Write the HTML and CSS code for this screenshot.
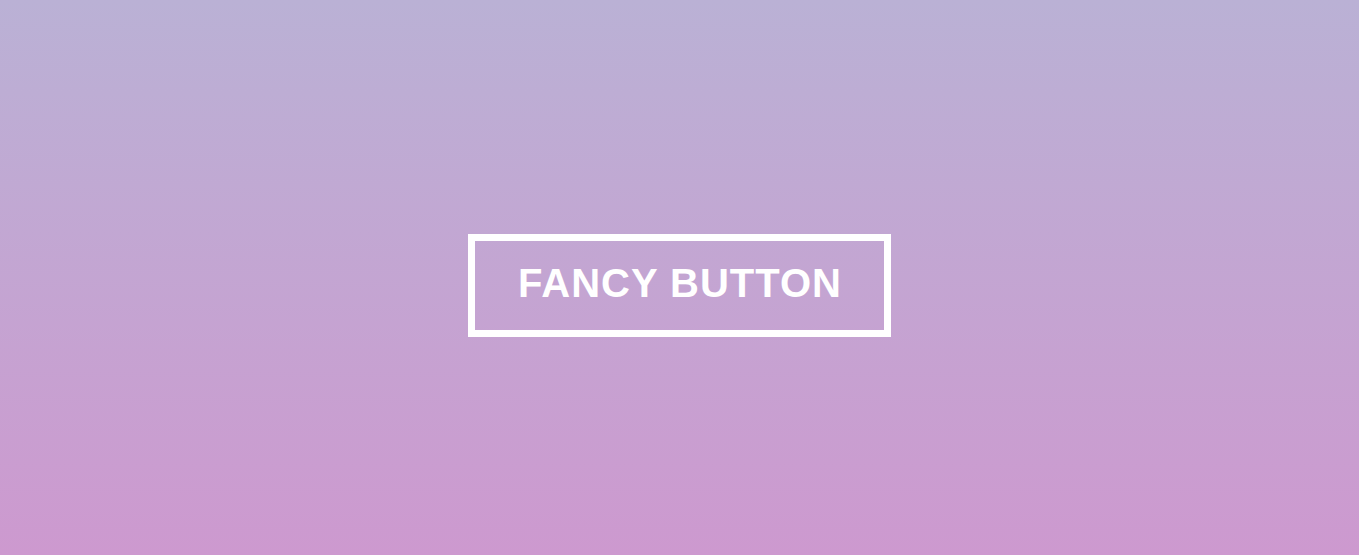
FILE: index.html
```html
<!DOCTYPE html>
<html lang="en">
<head>
<meta charset="utf-8">
<title>Fancy Button</title>
<link rel="stylesheet" href="styles.css">
</head>
<body>
  <main class="stage">
    <button class="fancy-btn" type="button">FANCY BUTTON</button>
  </main>
</body>
</html>
```
FILE: styles.css
```css
html {
  height: 100%;
  background: linear-gradient(to bottom, #bab1d5 0%, #cd99cf 100%);
}

body {
  margin: 8px;
  min-height: 100vh;
  display: flex;
  font-family: "Liberation Sans", Arial, sans-serif;
}

.stage {
  flex: 1;
  display: flex;
  align-items: center;
  justify-content: center;
}

.fancy-btn {
  background: transparent;
  border: 7px solid #ffffff;
  color: #ffffff;
  font-family: "Liberation Sans", Arial, sans-serif;
  font-weight: 700;
  font-size: 40px;
  letter-spacing: 1px;
  line-height: 46px;
  padding: 19px 42px 24px 43px;
  margin: 0;
  cursor: pointer;
}
```
